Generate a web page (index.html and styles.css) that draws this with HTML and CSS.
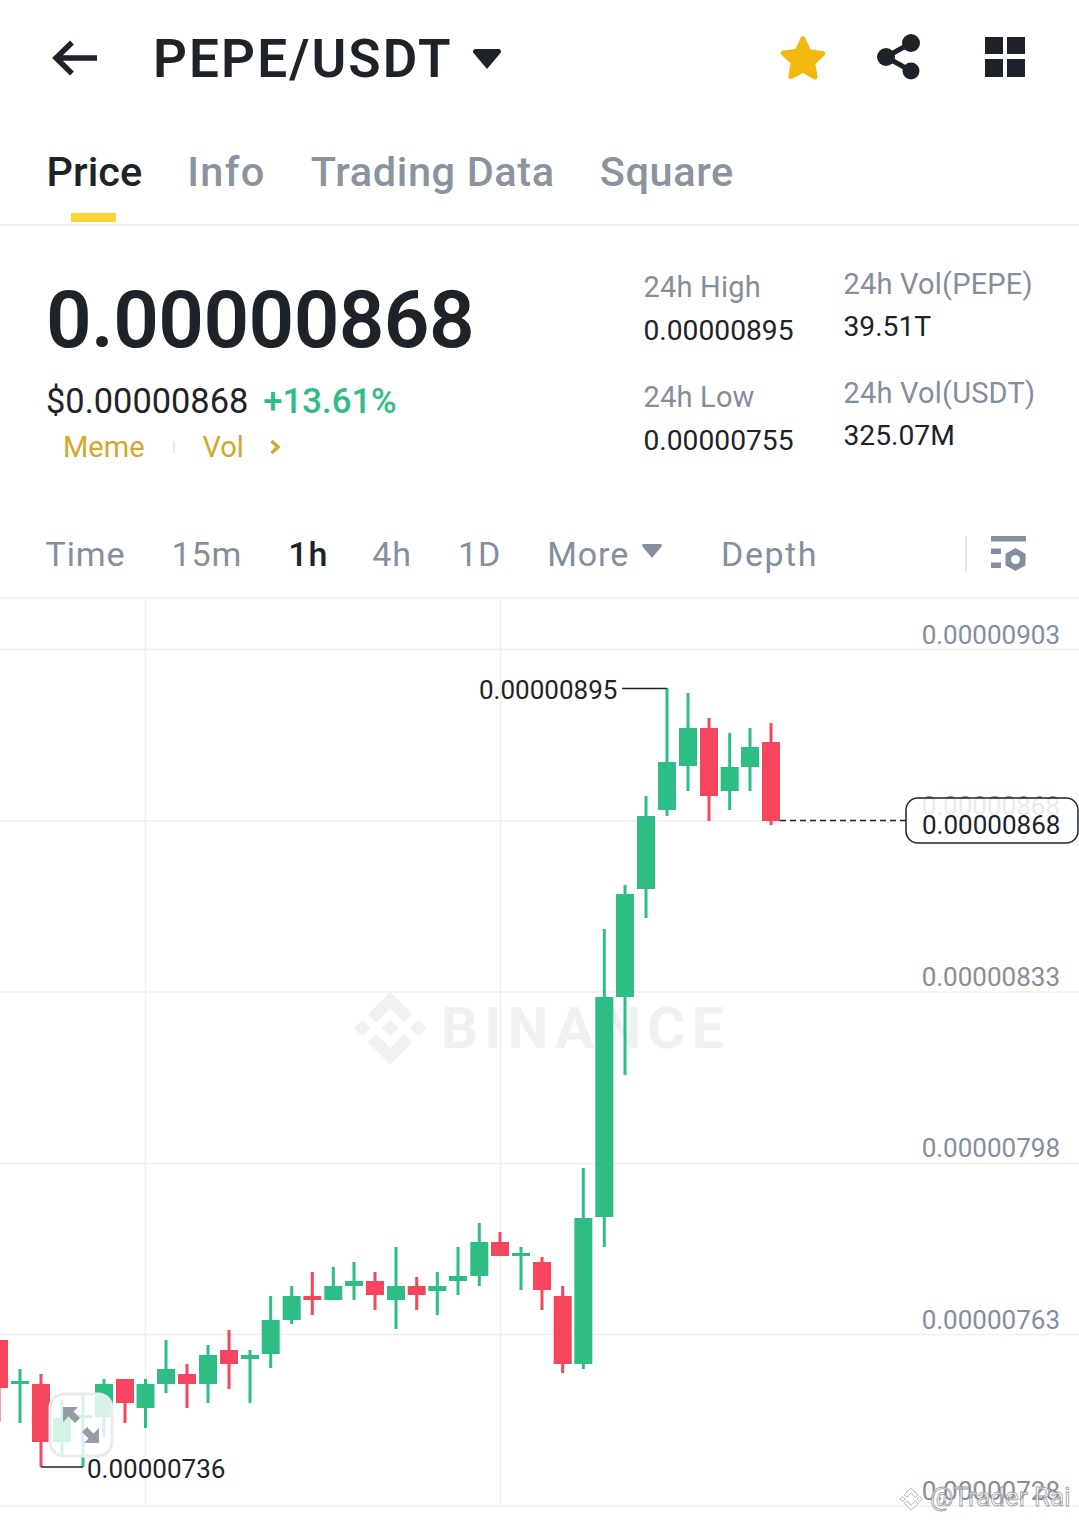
FILE: index.html
```html
<!DOCTYPE html>
<html lang="en">
<head>
<meta charset="utf-8">
<title>PEPE/USDT</title>
<link rel="stylesheet" href="styles.css">
</head>
<body>
<div class="page">
  <header class="topbar">
    <svg class="back" viewBox="0 0 48 38" width="48" height="38"><path d="M47 19H7M22 3.500 6 19l16 15.500" fill="none" stroke="#1e2329" stroke-width="5.500"/></svg>
    <h1 class="pair">PEPE/USDT</h1>
    <svg class="caret" viewBox="0 0 28 20" width="28" height="20"><path d="M2.500 0h23A2.500 2.500 0 0 1 27.500 4L14 20 .5 4A2.500 2.500 0 0 1 2.500 0z" fill="#1e2329"/></svg>
    <div class="actions">
      <svg class="star" viewBox="0 0 46 46" width="46" height="46"><path d="M23 2.500c1 0 1.800.6 2.300 1.600l5.300 11.300 12.300 1.700c2.200.3 3 2.700 1.500 4.300l-9 8.700 2.200 12.400c.4 2.200-1.800 3.800-3.800 2.800L23 39l-10.800 5.800c-2 1-4.200-.6-3.800-2.800l2.200-12.400-9-8.700c-1.500-1.600-.7-4 1.500-4.300l12.300-1.700 5.300-11.300c.5-1 1.300-1.600 2.300-1.600z" fill="#f0b90b"/></svg>
      <svg class="share" viewBox="0 0 44 46" width="44" height="46"><path d="M34 9 9 23l25 14" fill="none" stroke="#1e2329" stroke-width="5"/><circle cx="34" cy="9" r="9" fill="#1e2329"/><circle cx="9" cy="23" r="9" fill="#1e2329"/><circle cx="34" cy="37" r="8.500" fill="#1e2329"/></svg>
      <svg class="apps" viewBox="0 0 40 40" width="40" height="40"><path d="M0 0h18v17H0zM22 0h18v17H22zM0 22h18v18H0zM22 22h18v18H22z" fill="#1e2329"/></svg>
    </div>
  </header>

  <nav class="tabs">
    <a class="tab tab-active">Price</a>
    <a class="tab tab-info">Info</a>
    <a class="tab">Trading Data</a>
    <a class="tab">Square</a>
  </nav>

  <section class="summary">
    <div class="quote">
      <div class="last">0.00000868</div>
      <div class="fiat"><span>$0.00000868</span><span class="change">+13.61%</span></div>
      <div class="tags">
        <span>Meme</span><i class="tag-sep"></i><span>Vol</span>
        <svg class="chev" viewBox="0 0 12 16" width="12" height="16"><path d="M2.500 2 9 8l-6.500 6" fill="none" stroke="#d4a72c" stroke-width="3.500"/></svg>
      </div>
    </div>
    <div class="stats">
      <dl class="stat-col">
        <dt>24h High</dt><dd>0.00000895</dd>
        <dt>24h Low</dt><dd>0.00000755</dd>
      </dl>
      <dl class="stat-col stat-col-alt">
        <dt>24h Vol(PEPE)</dt><dd>39.51T</dd>
        <dt>24h Vol(USDT)</dt><dd>325.07M</dd>
      </dl>
    </div>
  </section>

  <div class="intervals">
    <span>Time</span>
    <span>15m</span>
    <span class="on">1h</span>
    <span>4h</span>
    <span>1D</span>
    <span class="more">More<svg viewBox="0 0 20 14" width="20" height="14"><path d="M1.500 0h17A1.500 1.500 0 0 1 19.500 2.500L10 14 .5 2.500A1.500 1.500 0 0 1 1.500 0z" fill="#848e9c"/></svg></span>
    <span class="depth">Depth</span>
    <i class="int-sep"></i>
    <svg class="chart-set" viewBox="0 0 36 36" width="36" height="36"><path d="M0 0h35v5.500H0zM0 12.500h10v5.500H0zM0 26.500h10V32H0z" fill="#848e9c"/><path fill-rule="evenodd" d="M24.500 12l10 5.700v11.600l-10 5.700-10-5.700V17.700zM24.500 19a4.500 4.500 0 1 0 0 9 4.500 4.500 0 0 0 0-9z" fill="#848e9c"/></svg>
  </div>

  <div class="chart">
    <svg class="plot" viewBox="0 599 1079 921" width="1079" height="921">
      <g class="grid">
        <path d="M0 649.500H1079M0 821H1079M0 992H1079M0 1163.500H1079M0 1334.500H1079M0 1506H1079M145.500 599V1506M500.500 599V1506"/>
      </g>
      <g class="mark">
        <path transform="translate(354 992) scale(.572)" d="M38.730 53.200l24.590-24.580 24.600 24.600 14.300-14.310L63.320 0 24.420 38.900l14.310 14.300zM0 63.310l14.300-14.310 14.310 14.310-14.310 14.300zM38.730 73.410l24.590 24.590 24.600-24.600 14.310 14.290-38.900 38.910-38.910-38.880v-.03zM98 63.310l14.300-14.310 14.310 14.300-14.310 14.320zM77.830 63.300L63.320 48.780 52.590 59.510l-1.240 1.230-2.540 2.540 14.510 14.500 14.510-14.470z"/>
        <text x="441" y="1048" class="mark-text">BINANCE</text>
      </g>
      <g class="axis">
        <text x="1060" y="644">0.00000903</text>
        <text x="1060" y="815">0.00000868</text>
        <text x="1060" y="986">0.00000833</text>
        <text x="1060" y="1157">0.00000798</text>
        <text x="1060" y="1329">0.00000763</text>
        <text x="1060" y="1500">0.00000728</text>
      </g>
      <g class="wick-up">
        <path d="M20 1369V1423M62 1400V1457M83 1393V1467M104 1379V1437M145.500 1379V1428M166 1340V1393M208 1345V1403M250 1350V1403M270.700 1296V1368M291.700 1286V1324M333.300 1267V1300M354 1262V1300M396 1247V1329M437.300 1272V1315M458 1247V1295M479.300 1223V1286M521 1247V1290M583.300 1168V1369M604.300 929V1247M625 885V1075M646 796V918M667 688V816M688 693V791M729.700 733V810M750 728V791"/>
      </g>
      <g class="wick-down">
        <path d="M-1 1340V1422M41 1374V1467M125 1379V1423M187 1364V1408M229 1330V1389M312.300 1272V1315M375 1272V1310M416.700 1277V1310M500 1232V1256M542 1257V1310M562.700 1286V1373M709 718V821M771 723V825"/>
      </g>
      <g class="body-up">
        <rect x="11" y="1381" width="18" height="3"/>
        <rect x="53" y="1418" width="18" height="24"/>
        <rect x="74" y="1415" width="18" height="3"/>
        <rect x="95" y="1384" width="18" height="33"/>
        <rect x="136.500" y="1384" width="18" height="24"/>
        <rect x="157" y="1369" width="18" height="15"/>
        <rect x="199" y="1355" width="18" height="29"/>
        <rect x="241" y="1355" width="18" height="4"/>
        <rect x="261.700" y="1320" width="18" height="34"/>
        <rect x="282.700" y="1296" width="18" height="24"/>
        <rect x="324.300" y="1286" width="18" height="14"/>
        <rect x="345" y="1281" width="18" height="5"/>
        <rect x="387" y="1286" width="18" height="14"/>
        <rect x="428.300" y="1286" width="18" height="5"/>
        <rect x="449" y="1276" width="18" height="5"/>
        <rect x="470.300" y="1242" width="18" height="34"/>
        <rect x="512" y="1253" width="18" height="3"/>
        <rect x="574.300" y="1218" width="18" height="146"/>
        <rect x="595.300" y="997" width="18" height="220"/>
        <rect x="616" y="894" width="18" height="103"/>
        <rect x="637" y="816" width="18" height="73"/>
        <rect x="658" y="762" width="18" height="48"/>
        <rect x="679" y="728" width="18" height="38"/>
        <rect x="720.700" y="767" width="18" height="24"/>
        <rect x="741" y="747" width="18" height="20"/>
      </g>
      <g class="body-down">
        <rect x="-10" y="1340" width="18" height="48"/>
        <rect x="32" y="1384" width="18" height="58"/>
        <rect x="116" y="1379" width="18" height="24"/>
        <rect x="178" y="1374" width="18" height="10"/>
        <rect x="220" y="1350" width="18" height="14"/>
        <rect x="303.300" y="1296" width="18" height="4"/>
        <rect x="366" y="1281" width="18" height="14"/>
        <rect x="407.700" y="1286" width="18" height="9"/>
        <rect x="491" y="1242" width="18" height="14"/>
        <rect x="533" y="1262" width="18" height="28"/>
        <rect x="553.700" y="1296" width="18" height="68"/>
        <rect x="700" y="728" width="18" height="68"/>
        <rect x="762" y="742" width="18" height="79"/>
      </g>
      <path class="leader" d="M622 688.500H667M41 1467H83"/>
      <text class="note" x="479" y="699">0.00000895</text>
      <text class="note" x="87" y="1478">0.00000736</text>
      <path class="dash" d="M780 820.500H906"/>
      <rect class="pill" x="906" y="798" width="172" height="45" rx="12"/>
      <text class="note" x="922" y="834">0.00000868</text>
      <rect class="expand" x="50" y="1394" width="62" height="62" rx="14"/>
      <path class="expand-arrows" d="M63 1407h15l-4.500 4.500L80 1418l-5 5-6.500-6.500L63 1422zM99 1443H84l4.500-4.500L82 1432l5-5 6.500 6.500 5.500-5.500z"/>
      <path class="stamp-logo" transform="translate(900 1488) scale(.175)" d="M38.730 53.200l24.590-24.580 24.600 24.600 14.300-14.310L63.320 0 24.420 38.900l14.310 14.300zM0 63.310l14.300-14.310 14.310 14.310-14.310 14.300zM38.730 73.410l24.590 24.590 24.600-24.600 14.310 14.290-38.900 38.910-38.910-38.880v-.03zM98 63.310l14.300-14.310 14.310 14.300-14.310 14.320z"/>
      <text class="stamp" x="930" y="1506">@Trader Rai</text>
    </svg>
  </div>
</div>
</body>
</html>
```

FILE: styles.css
```css
* { box-sizing: border-box; }
html, body { margin: 0; padding: 0; background: #fff; }
body { font-family: Roboto, "Liberation Sans", sans-serif; color: #1e2329; }
.page { width: 1079px; height: 1520px; overflow: hidden; display: flex; flex-direction: column; }

.topbar { height: 118px; display: flex; align-items: center; padding: 0 54px 0 50px; }
.back { margin-right: 55px; margin-top: -3px; flex: none; }
.pair { margin: 0 20px 0 0; font-size: 53px; font-weight: 600; letter-spacing: 2.100px; line-height: 1; }
.caret { margin-top: 0; flex: none; }
.actions { margin-left: auto; display: flex; align-items: center; }
.star { margin-right: 51px; margin-top: -4px; }
.share { margin-right: 64px; margin-top: -4px; }
.apps { margin-top: -4px; }

.tabs { height: 108px; display: flex; align-items: center; gap: 45px; padding: 0 0 0 46.500px; border-bottom: 2px solid #eceef0; }
.tab { position: relative; font-size: 41.500px; font-weight: 500; letter-spacing: .6px; color: #8a93a0; line-height: 1; margin-top: 2px; }
.tab-info { letter-spacing: 1.400px; }
.tab-active { color: #1e2329; letter-spacing: 0; }
.tab-active::after { content: ""; position: absolute; left: 50%; margin-left: -23px; bottom: -29px; width: 45px; height: 9px; background: #fcd535; }

.summary { height: 285px; display: flex; justify-content: space-between; padding: 0 0 0 47px; }
.quote { padding-top: 50px; }
.last { font-size: 80px; font-weight: 600; letter-spacing: -.6px; line-height: 88px; margin-left: -1px; }
.fiat { display: flex; gap: 15px; margin-top: 15px; font-size: 34.400px; line-height: 44px; margin-left: -1px; }
.change { color: #2ebd85; font-weight: 500; font-size: 34.700px; }
.tags { display: flex; align-items: center; margin: 6px 0 0 16px; font-size: 29px; line-height: 36px; color: #d4a72c; }
.tag-sep { width: 2px; height: 12px; background: #e6e8ea; margin: 0 28px; }
.chev { margin-left: 25px; }

.stats { display: flex; width: 435.500px; }
.stat-col { margin: 0; width: 200px; padding-top: 41px; }
.stat-col-alt { padding-top: 38px; }
.stat-col dt { font-size: 29px; letter-spacing: .2px; line-height: 40px; color: #848e9c; white-space: nowrap; }
.stat-col dd { margin: 4px 0 26px; font-size: 28.200px; line-height: 40px; white-space: nowrap; }
.stat-col-alt dd { margin: 3px 0 26px; }

.intervals { height: 88px; display: flex; align-items: center; gap: 46px; padding: 0 52px 0 45.500px; font-size: 34px; letter-spacing: .9px; color: #848e9c; border-bottom: 2px solid #f3f4f6; }
.intervals .on { color: #1e2329; font-weight: 500; margin-right: -2px; }
.more { display: flex; align-items: center; gap: 13px; }
.more svg { margin-top: -6px; }
.depth { margin-left: 13px; letter-spacing: 1.500px; }
.int-sep { margin-left: auto; width: 2px; height: 36px; background: #e6e8ea; }
.chart-set { margin-left: -22px; }

.chart { flex: 1; }
.plot { display: block; }
.grid path { fill: none; stroke: #eef0f2; stroke-width: 1.500; }
.mark { fill: #eff1f2; }
.mark-text { font-family: Roboto, sans-serif; font-weight: 700; font-size: 58px; letter-spacing: 6.200px; }
.axis text { font-size: 26px; fill: #848e9c; text-anchor: end; }
.wick-up path { fill: none; stroke: #2ebd85; stroke-width: 3; }
.wick-down path { fill: none; stroke: #f6465d; stroke-width: 3; }
.body-up rect { fill: #2ebd85; }
.body-down rect { fill: #f6465d; }
.leader { fill: none; stroke: #1e2329; stroke-width: 1.500; }
.note { font-size: 26px; fill: #1e2329; }
.dash { fill: none; stroke: #1e2329; stroke-width: 1.500; stroke-dasharray: 6 4; }
.pill { fill: rgba(255,255,255,.82); stroke: #1e2329; stroke-width: 1.500; }
.expand { fill: rgba(255,255,255,.8); stroke: #e9ebed; stroke-width: 3; }
.expand-arrows { fill: #979ca6; }
.stamp-logo { fill: #fff; stroke: #a8a8a8; stroke-width: 5; }
.stamp { font-size: 26px; fill: rgba(255,255,255,.75); stroke: #9a9a9a; stroke-width: .8; }
```
